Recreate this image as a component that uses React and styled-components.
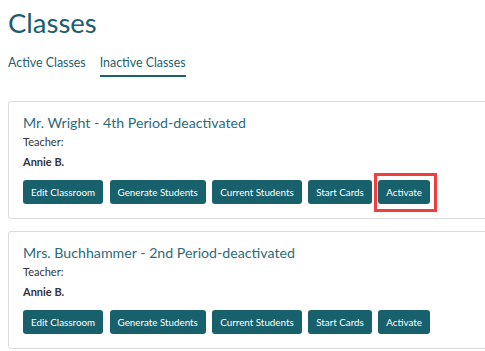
import React from "react";
import styled, { createGlobalStyle } from "styled-components";

const Global = createGlobalStyle`
  html, body {
    margin: 0;
    padding: 0;
    background: #fff;
    overflow: hidden;
  }
  body {
    font-family: Lato, "Open Sans", sans-serif;
  }
`;

const classes = [
  { name: "Mr. Wright - 4th Period-deactivated", teacher: "Annie B.", marked: true },
  { name: "Mrs. Buchhammer - 2nd Period-deactivated", teacher: "Annie B.", marked: false },
];

const actions = ["Edit Classroom", "Generate Students", "Current Students", "Start Cards"];

const Page = styled.main`
  width: 540px;
  padding: 5px 0 0 8px;
`;

const Title = styled.h1`
  margin: 0;
  font-size: 27.5px;
  line-height: 36px;
  font-weight: 400;
  color: #1d5e6b;
`;

const Tabs = styled.nav`
  display: flex;
  gap: 14px;
  margin-top: 14px;
`;

const Tab = styled.a`
  font-size: 12.4px;
  line-height: 16px;
  color: #235f6c;
  padding-bottom: 4px;
  border-bottom: 2px solid ${(p) => (p.$active ? "#1b6170" : "transparent")};
  cursor: pointer;
`;

const List = styled.div`
  display: flex;
  flex-direction: column;
  gap: 12px;
  margin-top: 24px;
`;

const Card = styled.section`
  border: 1px solid #dcdcdc;
  border-radius: 3px;
  padding: 12px 14px 14px;
`;

const CardTitle = styled.h2`
  margin: 0;
  font-size: 14.2px;
  line-height: 18px;
  font-weight: 400;
  color: #2b6b7b;
`;

const Label = styled.div`
  margin-top: 2px;
  font-size: 11px;
  line-height: 15px;
  color: #333;
`;

const Teacher = styled.div`
  margin-top: 5px;
  font-size: 11px;
  line-height: 15px;
  font-weight: 700;
  color: #333;
`;

const Actions = styled.div`
  display: flex;
  gap: 6.5px;
  margin-top: 11px;
`;

const Button = styled.button`
  height: 24px;
  padding: 0 8px;
  border: none;
  border-radius: 3px;
  background: #19606d;
  color: #fff;
  font-family: Lato, "Open Sans", sans-serif;
  font-size: 9.8px;
  cursor: pointer;
`;

const Marked = styled.span`
  position: relative;
  display: inline-flex;
`;

const Highlight = styled.span`
  position: absolute;
  left: -4px;
  right: -7px;
  top: -7px;
  bottom: -8px;
  border: 3px solid #f03d3d;
  pointer-events: none;
`;

const ClassCard = ({ name, teacher, marked }) => (
  <Card>
    <CardTitle>{name}</CardTitle>
    <Label>Teacher:</Label>
    <Teacher>{teacher}</Teacher>
    <Actions>
      {actions.map((a) => (
        <Button key={a}>{a}</Button>
      ))}
      {marked ? (
        <Marked>
          <Button>Activate</Button>
          <Highlight />
        </Marked>
      ) : (
        <Button>Activate</Button>
      )}
    </Actions>
  </Card>
);

export default function App() {
  return (
    <>
      <Global />
      <Page>
        <Title>Classes</Title>
        <Tabs>
          <Tab>Active Classes</Tab>
          <Tab $active>Inactive Classes</Tab>
        </Tabs>
        <List>
          {classes.map((c) => (
            <ClassCard key={c.name} {...c} />
          ))}
        </List>
      </Page>
    </>
  );
}
